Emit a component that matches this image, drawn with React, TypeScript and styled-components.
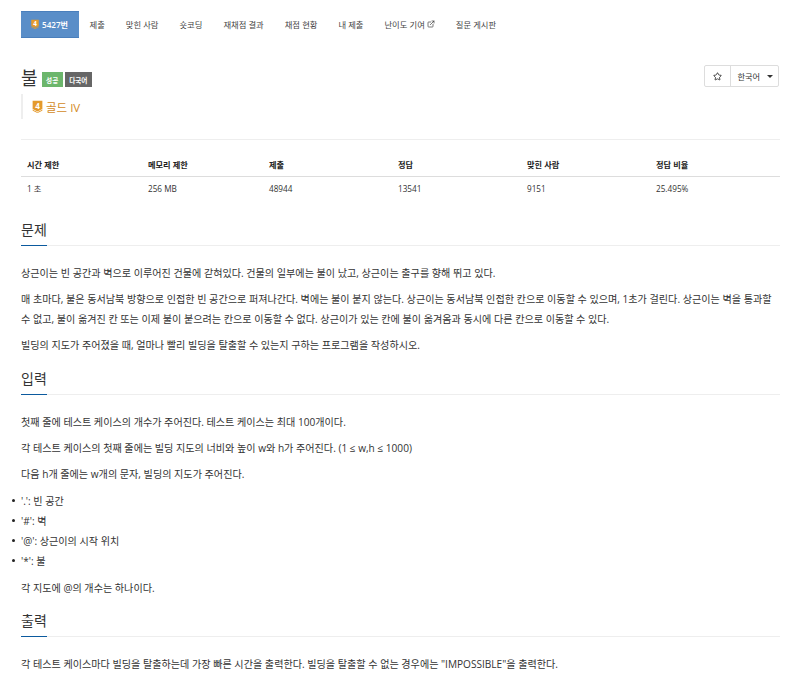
import React from 'react'
import styled, { createGlobalStyle } from 'styled-components'
import { ExternalLink, Star } from 'lucide-react'

const GlobalStyle = createGlobalStyle`
  html, body {
    margin: 0;
    padding: 0;
    background: #fff;
  }
  body {
    font-family: "Open Sans", "Noto Sans CJK KR", sans-serif;
    color: #333;
    font-size: 10px;
    overflow: hidden;
  }
`

const Page = styled.div`
  height: 682px;
  overflow: hidden;
  padding: 11px 20px 0 21px;
  box-sizing: border-box;
`

const Tabs = styled.nav`
  display: flex;
  align-items: stretch;
  height: 27px;
`

const Tab = styled.a<{ $active?: boolean }>`
  display: flex;
  align-items: center;
  gap: 2px;
  padding: 0 10.5px 2px;
  font-size: 8.3px;
  color: ${(p) => (p.$active ? '#fff' : '#444')};
  background: ${(p) => (p.$active ? '#5a8ec8' : 'transparent')};
  ${(p) => p.$active && 'width: 58px; box-sizing: border-box; gap: 2px; border-top: 1px solid #4a7fbc; border-bottom: 1px solid #4a7fbc; padding: 0 0 1px 9px; font-size: 8.1px; font-weight: 600;'}
`

const TitleRow = styled.div`
  display: flex;
  justify-content: space-between;
  align-items: flex-start;
  margin-top: 27px;
`

const TitleLeft = styled.div`
  display: flex;
  align-items: center;
  gap: 2px;
`

const Title = styled.h1`
  margin: 0 2px 0 0;
  padding-top: 1px;
  font-size: 18px;
  font-weight: 400;
  line-height: 24px;
  color: #333;
`

const Label = styled.span<{ $color: string }>`
  display: inline-flex;
  align-items: center;
  justify-content: center;
  height: 15px;
  margin-top: 4px;
  padding: 0 4.5px;
  font-size: 6.6px;
  font-weight: 600;
  color: #fff;
  background: ${(p) => p.$color};
`

const ButtonGroup = styled.div`
  display: flex;
  height: 22px;
  margin-right: 1px;
  border: 1px solid #ddd;
  border-radius: 2px;
  box-sizing: border-box;
`

const GroupButton = styled.div`
  display: flex;
  align-items: center;
  justify-content: center;
  gap: 7px;
  padding: 0 5px 0 6px;
  font-size: 8.2px;
  color: #333;
  &:first-child {
    padding: 0 8px;
  }
  & + & {
    border-left: 1px solid #ddd;
  }
`

const Caret = styled.span`
  width: 0;
  height: 0;
  border-left: 3px solid transparent;
  border-right: 3px solid transparent;
  border-top: 3px solid #333;
`

const TierBlock = styled.blockquote`
  display: flex;
  align-items: center;
  gap: 2px;
  margin: 4px 0 0;
  height: 25px;
  padding-left: 8px;
  border-left: 2px solid #eee;
  font-size: 11.5px;
  color: #d28a26;
`

const Rule = styled.hr`
  margin: 20px 0 0;
  border: 0;
  border-top: 1px solid #eee;
`

const StatsTable = styled.table`
  width: 100%;
  margin-top: 12px;
  border-collapse: collapse;
  table-layout: fixed;
  font-size: 8.2px;

  th, td {
    padding: 0 6px;
    text-align: left;
    color: #333;
  }
  th {
    height: 24px;
    font-weight: 700;
    color: #222;
    border-bottom: 1px solid #ddd;
  }
  td {
    height: 22px;
  }
`

const Section = styled.section<{ $gap: number }>`
  margin-top: ${(p) => p.$gap}px;
`

const Heading = styled.h2`
  position: relative;
  margin: 0 0 17px;
  height: 27px;
  font-size: 14px;
  line-height: 23px;
  font-weight: 400;
  color: #333;
  border-bottom: 1px solid #eee;
  &::after {
    content: '';
    position: absolute;
    left: 0;
    bottom: -1px;
    width: 26px;
    height: 1px;
    background: #0b5a9e;
  }
`

const Para = styled.p`
  margin: 0 0 6px;
  font-size: 10.1px;
  line-height: 20px;
  color: #333;
`

const BulletList = styled.ul`
  margin: 7px 0 7px;
  padding: 0;
  list-style: none;
  font-size: 10.1px;
  line-height: 20px;
  color: #333;
`

const Bullet = styled.li`
  position: relative;
  &::before {
    content: '';
    position: absolute;
    left: -9px;
    top: 8px;
    width: 3px;
    height: 3px;
    border-radius: 50%;
    background: #222;
  }
`

function TierIcon({ size }: { size: number }) {
  return (
    <svg width={size} height={size} viewBox="0 0 16 16">
      <path d="M2 1h12v10l-6 3-6-3z" fill="#e49a2c" />
      <path d="M2 12.5l6 3 6-3" fill="none" stroke="#e49a2c" strokeWidth="1.2" />
      <text x="8" y="10.5" textAnchor="middle" fontSize="10" fontWeight="700" fill="#fff" fontFamily="Open Sans">4</text>
    </svg>
  )
}

const columns = [
  { width: 121, head: '시간 제한', value: '1 초' },
  { width: 121, head: '메모리 제한', value: '256 MB' },
  { width: 129, head: '제출', value: '48944' },
  { width: 129, head: '정답', value: '13541' },
  { width: 129, head: '맞힌 사람', value: '9151' },
  { width: 130, head: '정답 비율', value: '25.495%' },
]

export default function App() {
  return (
    <Page>
      <GlobalStyle />
      <Tabs>
        <Tab $active><TierIcon size={10} />5427번</Tab>
        <Tab>제출</Tab>
        <Tab>맞힌 사람</Tab>
        <Tab>숏코딩</Tab>
        <Tab>재채점 결과</Tab>
        <Tab>채점 현황</Tab>
        <Tab>내 제출</Tab>
        <Tab>난이도 기여<ExternalLink size={8} color="#333" /></Tab>
        <Tab>질문 게시판</Tab>
      </Tabs>

      <TitleRow>
        <TitleLeft>
          <Title>불</Title>
          <Label $color="#6cb66c">성공</Label>
          <Label $color="#666">다국어</Label>
        </TitleLeft>
        <ButtonGroup>
          <GroupButton><Star size={9} color="#111" /></GroupButton>
          <GroupButton>한국어<Caret /></GroupButton>
        </ButtonGroup>
      </TitleRow>

      <TierBlock><TierIcon size={13} />골드 IV</TierBlock>
      <Rule />

      <StatsTable>
        <colgroup>
          {columns.map((c) => <col key={c.head} width={c.width} />)}
        </colgroup>
        <thead>
          <tr>{columns.map((c) => <th key={c.head}>{c.head}</th>)}</tr>
        </thead>
        <tbody>
          <tr>{columns.map((c) => <td key={c.head}>{c.value}</td>)}</tr>
        </tbody>
      </StatsTable>

      <Section $gap={19}>
        <Heading>문제</Heading>
        <Para>상근이는 빈 공간과 벽으로 이루어진 건물에 갇혀있다. 건물의 일부에는 불이 났고, 상근이는 출구를 향해 뛰고 있다.</Para>
        <Para>매 초마다, 불은 동서남북 방향으로 인접한 빈 공간으로 퍼져나간다. 벽에는 불이 붙지 않는다. 상근이는 동서남북 인접한 칸으로 이동할 수 있으며, 1초가 걸린다. 상근이는 벽을 통과할 수 없고, 불이 옮겨진 칸 또는 이제 불이 붙으려는 칸으로 이동할 수 없다. 상근이가 있는 칸에 불이 옮겨옴과 동시에 다른 칸으로 이동할 수 있다.</Para>
        <Para>빌딩의 지도가 주어졌을 때, 얼마나 빨리 빌딩을 탈출할 수 있는지 구하는 프로그램을 작성하시오.</Para>
      </Section>

      <Section $gap={12}>
        <Heading>입력</Heading>
        <Para>첫째 줄에 테스트 케이스의 개수가 주어진다. 테스트 케이스는 최대 100개이다.</Para>
        <Para>각 테스트 케이스의 첫째 줄에는 빌딩 지도의 너비와 높이 w와 h가 주어진다. (1 ≤ w,h ≤ 1000)</Para>
        <Para>다음 h개 줄에는 w개의 문자, 빌딩의 지도가 주어진다.</Para>
        <BulletList>
          <Bullet>'.': 빈 공간</Bullet>
          <Bullet>'#': 벽</Bullet>
          <Bullet>'@': 상근이의 시작 위치</Bullet>
          <Bullet>'*': 불</Bullet>
        </BulletList>
        <Para>각 지도에 @의 개수는 하나이다.</Para>
      </Section>

      <Section $gap={11}>
        <Heading>출력</Heading>
        <Para>각 테스트 케이스마다 빌딩을 탈출하는데 가장 빠른 시간을 출력한다. 빌딩을 탈출할 수 없는 경우에는 "IMPOSSIBLE"을 출력한다.</Para>
      </Section>
    </Page>
  )
}
